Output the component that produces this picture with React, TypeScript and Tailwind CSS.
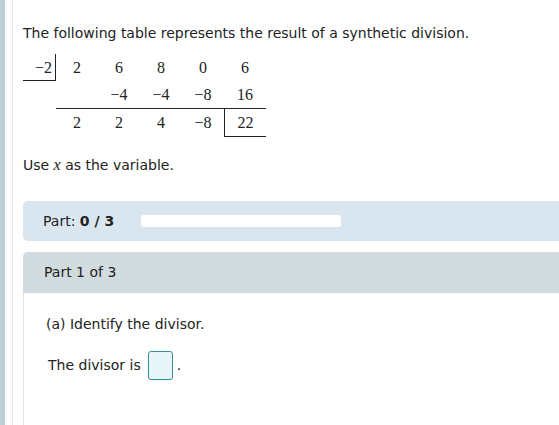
import React from 'react';

const cell = 'w-[42px] text-center';

const SyntheticTable: React.FC = () => {
  return (
    <div className="flex font-[family-name:Liberation_Serif,Times_New_Roman,serif] text-[16px] leading-[27px] text-[#222]">
      <div className="w-[33px]">
        <div className="border-b border-r border-[#222] h-[27px] pr-[3px] text-right">−2</div>
      </div>
      <div className="flex flex-col">
        <div className="flex">
          <div className={cell}>2</div>
          <div className={cell}>6</div>
          <div className={cell}>8</div>
          <div className={cell}>0</div>
          <div className={cell}>6</div>
        </div>
        <div className="flex border-b border-[#222] h-[28px]">
          <div className={cell}></div>
          <div className={cell}>−4</div>
          <div className={cell}>−4</div>
          <div className={cell}>−8</div>
          <div className={cell}>16</div>
        </div>
        <div className="flex">
          <div className={cell}>2</div>
          <div className={cell}>2</div>
          <div className={cell}>4</div>
          <div className={cell}>−8</div>
          <div className="w-[42px] text-center border-l border-b border-[#222]">22</div>
        </div>
      </div>
    </div>
  );
};

export default function App() {
  return (
    <div className="flex h-[425px] overflow-hidden bg-white font-[family-name:DejaVu_Sans,Verdana,sans-serif] text-[14px] text-[#222]">
      <div className="w-[5px] shrink-0 bg-[#c0ced6]"></div>
      <div className="w-[7px] shrink-0"></div>
      <div className="w-px shrink-0 bg-[#dfe5e9]"></div>
      <div className="flex-1 pl-[10px] pt-[24px]">
        <p className="leading-[18px]">The following table represents the result of a synthetic division.</p>
        <div className="mt-[12px]">
          <SyntheticTable />
        </div>
        <p className="mt-[19px] leading-[18px]">
          Use <span className="font-[family-name:Liberation_Serif,serif] italic text-[16px]">x</span> as the variable.
        </p>

        <div className="mt-[27px] flex h-[40px] items-center rounded-l-[5px] bg-[#dae6ef] pl-[20px]">
          <span className="w-[98px]">
            Part: <span className="font-bold">0 / 3</span>
          </span>
          <div className="h-[12px] w-[200px] rounded-[3px] bg-white"></div>
        </div>

        <div className="mt-[11px] rounded-tl-[5px] bg-[#d2dbde]">
          <div className="flex h-[41px] items-center pl-[21px]">Part 1 of 3</div>
        </div>
        <div className="h-[200px] border-l border-[#dfe5e9] pl-[22px] pt-[22px]">
          <p className="leading-[18px]">(a) Identify the divisor.</p>
          <div className="mt-[18px] flex items-center pl-[2px]">
            <span>The divisor is</span>
            <div className="ml-[7px] h-[29px] w-[25px] rounded-[3px] border border-[#3a8e99] bg-[#e8f5f8]"></div>
            <span className="ml-[4px]">.</span>
          </div>
        </div>
      </div>
    </div>
  );
}
